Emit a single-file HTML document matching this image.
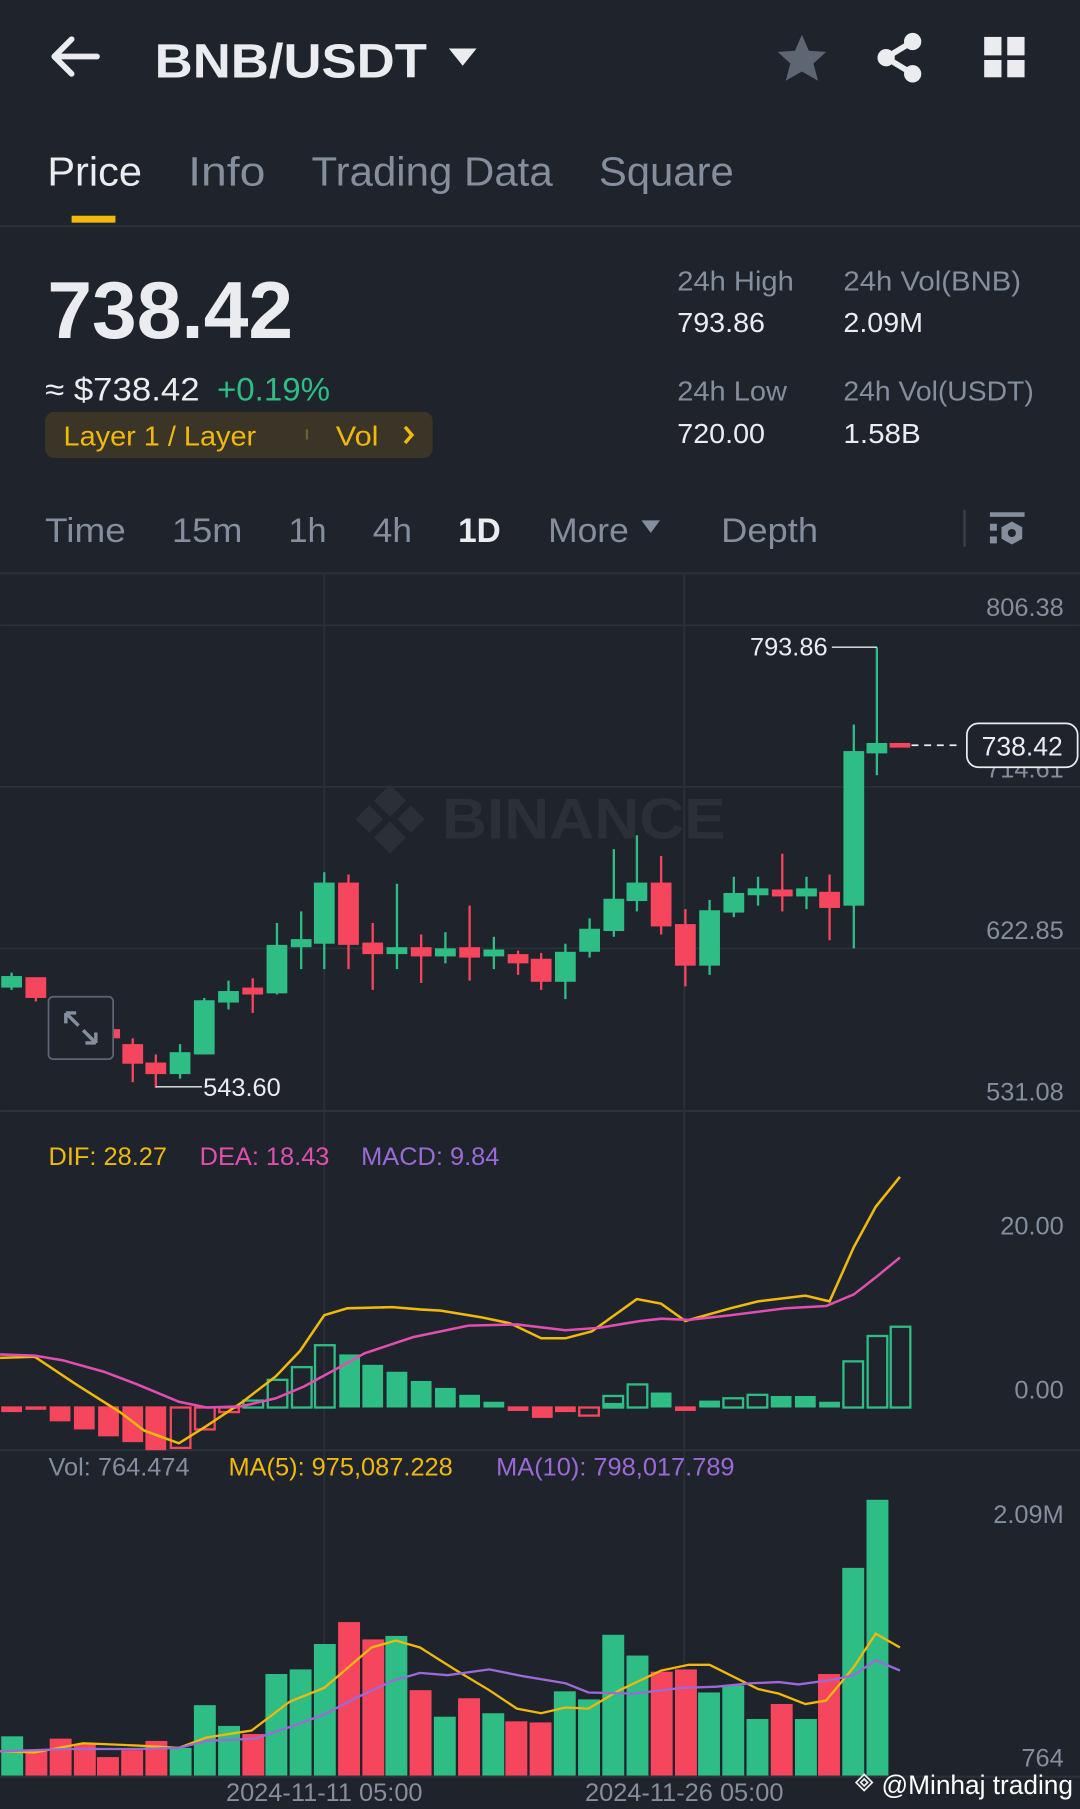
<!DOCTYPE html>
<html><head><meta charset="utf-8"><style>
html,body{margin:0;padding:0;background:#1f232b;width:1080px;height:1809px;overflow:hidden}
svg{display:block}
text{font-family:"Liberation Sans",sans-serif}
</style></head><body>
<svg width="1080" height="1809" viewBox="0 0 936 1568" xmlns="http://www.w3.org/2000/svg">
<rect width="936" height="1568" fill="#1f232b"/>
<!-- header -->
<path d="M47 49 H84 M47 49 L62 34 M47 49 L62 64" stroke="#eaecef" stroke-width="5" fill="none" stroke-linecap="round" stroke-linejoin="round"/>
<text x="134" y="67" font-size="42" font-weight="bold" fill="#eaecef" textLength="236" lengthAdjust="spacingAndGlyphs">BNB/USDT</text>
<path d="M389 42 H413 L401 57 Z" fill="#eaecef"/>
<path d="M695 30 L701 44 L716 45 L705 55 L709 70 L695 62 L681 70 L685 55 L674 45 L689 44 Z" fill="#5e6673"/>
<g fill="#eaecef" stroke="#eaecef"><circle cx="791" cy="36" r="7"/><circle cx="791" cy="64" r="7"/><circle cx="768" cy="50" r="7"/><path d="M791 36 L768 50 L791 64" stroke-width="5" fill="none"/></g>
<g fill="#eaecef"><rect x="853" y="32" width="15" height="16"/><rect x="873" y="32" width="15" height="16"/><rect x="853" y="52" width="15" height="15"/><rect x="873" y="52" width="15" height="15"/></g>
<!-- tabs -->
<g font-size="35">
<text x="41" y="161" fill="#eaecef" textLength="82" lengthAdjust="spacingAndGlyphs">Price</text>
<text x="163" y="161" fill="#848e9c" textLength="67" lengthAdjust="spacingAndGlyphs">Info</text>
<text x="270" y="161" fill="#848e9c" textLength="209" lengthAdjust="spacingAndGlyphs">Trading Data</text>
<text x="519" y="161" fill="#848e9c" textLength="117" lengthAdjust="spacingAndGlyphs">Square</text>
</g>
<rect x="62" y="187" width="38" height="6" fill="#f0b90b"/>
<rect x="0" y="195" width="936" height="2" fill="#2b3139"/>
<!-- price -->
<text x="41" y="293" font-size="70" font-weight="bold" fill="#eaecef" textLength="213" lengthAdjust="spacingAndGlyphs">738.42</text>
<text x="39" y="347" font-size="28" fill="#eaecef" textLength="134" lengthAdjust="spacingAndGlyphs">≈ $738.42</text>
<text x="188" y="347" font-size="28" fill="#2ebd85" textLength="98" lengthAdjust="spacingAndGlyphs">+0.19%</text>
<rect x="39" y="357" width="336" height="40" rx="8" fill="#3a3526"/>
<text x="55" y="386" font-size="24" fill="#f0b90b" textLength="167" lengthAdjust="spacingAndGlyphs">Layer 1 / Layer</text>
<rect x="265" y="372" width="2" height="9" fill="#6b6030"/>
<text x="291" y="386" font-size="24" fill="#f0b90b" textLength="37" lengthAdjust="spacingAndGlyphs">Vol</text>
<path d="M351 370 L357 377 L351 384" stroke="#f0b90b" stroke-width="3" fill="none"/>
<g font-size="24">
<text x="587" y="252" fill="#848e9c" textLength="101" lengthAdjust="spacingAndGlyphs">24h High</text>
<text x="587" y="288" fill="#eaecef" textLength="76" lengthAdjust="spacingAndGlyphs">793.86</text>
<text x="587" y="347" fill="#848e9c" textLength="95" lengthAdjust="spacingAndGlyphs">24h Low</text>
<text x="587" y="384" fill="#eaecef" textLength="76" lengthAdjust="spacingAndGlyphs">720.00</text>
<text x="731" y="252" fill="#848e9c" textLength="154" lengthAdjust="spacingAndGlyphs">24h Vol(BNB)</text>
<text x="731" y="288" fill="#eaecef" textLength="69" lengthAdjust="spacingAndGlyphs">2.09M</text>
<text x="731" y="347" fill="#848e9c" textLength="165" lengthAdjust="spacingAndGlyphs">24h Vol(USDT)</text>
<text x="731" y="384" fill="#eaecef" textLength="67" lengthAdjust="spacingAndGlyphs">1.58B</text>
</g>
<!-- time row -->
<g font-size="30" fill="#848e9c">
<text x="39" y="470" textLength="70" lengthAdjust="spacingAndGlyphs">Time</text>
<text x="149" y="470" textLength="61" lengthAdjust="spacingAndGlyphs">15m</text>
<text x="250" y="470" textLength="33" lengthAdjust="spacingAndGlyphs">1h</text>
<text x="323" y="470" textLength="34" lengthAdjust="spacingAndGlyphs">4h</text>
<text x="397" y="470" fill="#eaecef" font-weight="bold" textLength="37" lengthAdjust="spacingAndGlyphs">1D</text>
<text x="475" y="470" textLength="70" lengthAdjust="spacingAndGlyphs">More</text>
<text x="625" y="470" textLength="84" lengthAdjust="spacingAndGlyphs">Depth</text>
</g>
<path d="M556 451 H572 L564 462 Z" fill="#848e9c"/>
<rect x="835" y="442" width="2" height="32" fill="#3a414b"/>
<g fill="#848e9c"><rect x="858" y="444" width="30" height="4"/><rect x="858" y="454" width="6" height="6"/><rect x="858" y="465" width="6" height="6"/><path d="M877 452 L886 457 V467 L877 472 L868 467 V457 Z"/></g>
<circle cx="877" cy="462" r="3.5" fill="#1f232b"/>
<!-- chart grid -->
<rect x="0" y="496" width="936" height="2" fill="#2b3139"/>
<g stroke="#2b3139" stroke-width="1.5">
<line x1="0" y1="542" x2="936" y2="542"/><line x1="0" y1="682" x2="936" y2="682"/><line x1="0" y1="822" x2="936" y2="822"/>
<line x1="281" y1="498" x2="281" y2="1540"/><line x1="593" y1="498" x2="593" y2="1540"/>
</g>
<rect x="0" y="962" width="936" height="2" fill="#2b3139"/>
<rect x="0" y="1256" width="936" height="2" fill="#2b3139"/>
<rect x="0" y="1539" width="936" height="2" fill="#2b3139"/>
<!-- watermark -->
<g fill="#2a2f38">
<path d="M338 680 L352 694 L338 708 L324 694 Z M338 712 L352 726 L338 740 L324 726 Z M320 698 L332 710 L320 722 L308 710 Z M356 698 L368 710 L356 722 L344 710 Z"/>
<text x="383" y="727" font-size="50" font-weight="bold" textLength="246" lengthAdjust="spacingAndGlyphs">BINANCE</text>
</g>
<!-- axis labels -->
<g font-size="22" fill="#848e9c" text-anchor="end">
<text x="922" y="534">806.38</text><text x="922" y="674">714.61</text><text x="922" y="814">622.85</text><text x="922" y="954">531.08</text>
<text x="922" y="1070">20.00</text><text x="922" y="1212">0.00</text><text x="922" y="1320">2.09M</text><text x="922" y="1531">764</text>
</g>
<g font-size="22" fill="#848e9c" text-anchor="middle">
<text x="281" y="1561">2024-11-11 05:00</text><text x="593" y="1561">2024-11-26 05:00</text>
</g>
<!-- candles -->
<g stroke-width="2">
<g stroke="#2ebd85" fill="#2ebd85">
<line x1="10" y1="843" x2="10" y2="858"/><rect x="2" y="847" width="16" height="8"/>
<line x1="156" y1="905" x2="156" y2="935"/><rect x="148" y="913" width="16" height="17"/>
<line x1="177" y1="865" x2="177" y2="913"/><rect x="169" y="868" width="16" height="45"/>
<line x1="198" y1="850" x2="198" y2="875"/><rect x="190" y="860" width="16" height="8"/>
<line x1="240" y1="800" x2="240" y2="862"/><rect x="232" y="820" width="16" height="40"/>
<line x1="261" y1="790" x2="261" y2="840"/><rect x="253" y="815" width="16" height="5"/>
<line x1="281" y1="756" x2="281" y2="840"/><rect x="273" y="766" width="16" height="51"/>
<line x1="344" y1="766" x2="344" y2="840"/><rect x="336" y="822" width="16" height="4"/>
<line x1="386" y1="808" x2="386" y2="835"/><rect x="378" y="823" width="16" height="5"/>
<line x1="428" y1="812" x2="428" y2="840"/><rect x="420" y="824" width="16" height="4"/>
<line x1="490" y1="818" x2="490" y2="866"/><rect x="482" y="826" width="16" height="24"/>
<line x1="511" y1="796" x2="511" y2="830"/><rect x="503" y="806" width="16" height="18"/>
<line x1="532" y1="736" x2="532" y2="812"/><rect x="524" y="780" width="16" height="26"/>
<line x1="552" y1="724" x2="552" y2="790"/><rect x="544" y="766" width="16" height="14"/>
<line x1="615" y1="780" x2="615" y2="845"/><rect x="607" y="790" width="16" height="46"/>
<line x1="636" y1="760" x2="636" y2="795"/><rect x="628" y="775" width="16" height="15"/>
<line x1="657" y1="760" x2="657" y2="785"/><rect x="649" y="771" width="16" height="4"/>
<line x1="699" y1="760" x2="699" y2="788"/><rect x="691" y="771" width="16" height="5"/>
<line x1="740" y1="628" x2="740" y2="822"/><rect x="732" y="652" width="16" height="132"/>
<line x1="760" y1="561" x2="760" y2="672"/><rect x="752" y="645" width="16" height="7"/>
</g>
<g stroke="#f6465d" fill="#f6465d">
<rect x="23" y="848" width="16" height="16"/><line x1="31" y1="848" x2="31" y2="868"/>
<rect x="87" y="893" width="16" height="6"/>
<line x1="115" y1="900" x2="115" y2="938"/><rect x="107" y="906" width="16" height="15"/>
<line x1="135" y1="914" x2="135" y2="943"/><rect x="127" y="922" width="16" height="8"/>
<line x1="219" y1="848" x2="219" y2="878"/><rect x="211" y="857" width="16" height="4"/>
<line x1="302" y1="758" x2="302" y2="840"/><rect x="294" y="766" width="16" height="52"/>
<line x1="323" y1="800" x2="323" y2="858"/><rect x="315" y="818" width="16" height="8"/>
<line x1="365" y1="810" x2="365" y2="852"/><rect x="357" y="822" width="16" height="6"/>
<line x1="407" y1="785" x2="407" y2="850"/><rect x="399" y="822" width="16" height="7"/>
<line x1="449" y1="824" x2="449" y2="845"/><rect x="441" y="828" width="16" height="6"/>
<line x1="469" y1="826" x2="469" y2="858"/><rect x="461" y="832" width="16" height="18"/>
<line x1="573" y1="742" x2="573" y2="810"/><rect x="565" y="766" width="16" height="36"/>
<line x1="594" y1="788" x2="594" y2="855"/><rect x="586" y="802" width="16" height="34"/>
<line x1="678" y1="740" x2="678" y2="790"/><rect x="670" y="772" width="16" height="4"/>
<line x1="719" y1="758" x2="719" y2="815"/><rect x="711" y="774" width="16" height="12"/>
<rect x="772" y="645" width="16" height="2"/>
</g>
</g>
<path d="M790 646 H830" stroke="#eaecef" stroke-width="1.5" stroke-dasharray="6 5"/>
<rect x="838" y="627" width="96" height="38" rx="10" fill="#1f232b" stroke="#eaecef" stroke-width="1.5"/>
<text x="886" y="655" font-size="23" fill="#eaecef" text-anchor="middle">738.42</text>
<path d="M721 561 H760" stroke="#eaecef" stroke-width="1.2"/>
<text x="650" y="568" font-size="22" fill="#eaecef">793.86</text>
<path d="M135 942 H175" stroke="#eaecef" stroke-width="1.2"/>
<text x="176" y="950" font-size="22" fill="#eaecef">543.60</text>
<!-- expand icon -->
<rect x="42" y="864" width="56" height="54" rx="4" fill="#1f232b" stroke="#5e6673" stroke-width="1.5"/>
<g stroke="#848e9c" stroke-width="3" fill="none"><path d="M57 878 L68 889 M57 878 V887 M57 878 H66"/><path d="M83 904 L72 893 M83 904 V895 M83 904 H74"/></g>
<!-- MACD -->
<g font-size="22">
<text x="42" y="1010" fill="#f0b90b">DIF: 28.27</text>
<text x="173" y="1010" fill="#e04fb0">DEA: 18.43</text>
<text x="313" y="1010" fill="#9c6ad8">MACD: 9.84</text>
</g>
<g fill="#f6465d">
<rect x="1" y="1219" width="18" height="5"/><rect x="22" y="1219" width="18" height="3"/><rect x="43" y="1219" width="18" height="13"/><rect x="64" y="1219" width="18" height="20"/><rect x="85" y="1219" width="18" height="26"/><rect x="106" y="1219" width="18" height="31"/><rect x="126" y="1219" width="18" height="38"/>
<rect x="440" y="1219" width="18" height="4"/><rect x="461" y="1219" width="18" height="10"/><rect x="481" y="1219" width="18" height="5"/><rect x="585" y="1219" width="18" height="4"/>
</g>
<g fill="none" stroke="#f6465d" stroke-width="2"><rect x="148" y="1220" width="17" height="35"/><rect x="169" y="1220" width="17" height="19"/><rect x="190" y="1220" width="17" height="4"/><rect x="502" y="1220" width="17" height="7"/></g>
<g fill="#2ebd85">
<rect x="294" y="1174" width="18" height="46"/><rect x="314" y="1183" width="18" height="37"/><rect x="335" y="1189" width="18" height="31"/><rect x="356" y="1197" width="18" height="23"/><rect x="377" y="1203" width="18" height="17"/><rect x="398" y="1209" width="18" height="11"/><rect x="419" y="1215" width="18" height="5"/>
<rect x="523" y="1216" width="18" height="4"/><rect x="564" y="1207" width="18" height="13"/><rect x="606" y="1214" width="18" height="6"/><rect x="668" y="1210" width="18" height="10"/><rect x="689" y="1210" width="18" height="10"/><rect x="710" y="1215" width="18" height="5"/>
</g>
<g fill="none" stroke="#2ebd85" stroke-width="2"><rect x="211" y="1214" width="17" height="6"/><rect x="232" y="1196" width="17" height="24"/><rect x="253" y="1185" width="17" height="35"/><rect x="273" y="1166" width="17" height="54"/><rect x="523" y="1210" width="17" height="10"/><rect x="544" y="1200" width="17" height="20"/><rect x="627" y="1212" width="17" height="8"/><rect x="648" y="1209" width="17" height="11"/><rect x="731" y="1180" width="17" height="40"/><rect x="752" y="1158" width="17" height="62"/><rect x="772" y="1150" width="17" height="70"/></g>
<polyline fill="none" stroke="#f0b90b" stroke-width="2.2" points="0,1177 30,1176 66,1200 104,1224 125,1240 155,1251 179,1236 209,1216 239,1193 260,1171 281,1140 301,1134 340,1133 364,1135 382,1136 418,1142 442,1147 469,1160 490,1160 513,1154 552,1126 573,1130 594,1145 633,1134 657,1128 698,1123 719,1128 740,1081 759,1046 780,1020"/>
<polyline fill="none" stroke="#e04fb0" stroke-width="2.2" points="0,1174 30,1175 54,1179 90,1189 119,1200 155,1215 179,1220 209,1219 239,1212 263,1202 287,1189 316,1173 358,1159 406,1149 448,1148 490,1153 519,1151 555,1145 573,1143 597,1144 633,1140 681,1134 716,1132 740,1122 758,1108 780,1090"/>
<!-- volume -->
<g font-size="22">
<text x="42" y="1279" fill="#848e9c">Vol: 764.474</text>
<text x="198" y="1279" fill="#f0b90b">MA(5): 975,087.228</text>
<text x="430" y="1279" fill="#9c6ad8">MA(10): 798,017.789</text>
</g>
<g fill="#2ebd85">
<rect x="1" y="1505" width="19" height="34"/><rect x="147" y="1515" width="19" height="24"/><rect x="168" y="1478" width="19" height="61"/><rect x="189" y="1496" width="19" height="43"/>
<rect x="230" y="1451" width="19" height="88"/><rect x="251" y="1447" width="19" height="92"/><rect x="272" y="1425" width="19" height="114"/><rect x="334" y="1418" width="19" height="121"/>
<rect x="376" y="1488" width="19" height="51"/><rect x="418" y="1485" width="19" height="54"/><rect x="480" y="1466" width="19" height="73"/><rect x="501" y="1473" width="19" height="66"/>
<rect x="522" y="1417" width="19" height="122"/><rect x="543" y="1435" width="19" height="104"/><rect x="605" y="1467" width="19" height="72"/><rect x="626" y="1461" width="19" height="78"/>
<rect x="647" y="1490" width="19" height="49"/><rect x="689" y="1490" width="19" height="49"/><rect x="730" y="1359" width="19" height="180"/><rect x="751" y="1300" width="19" height="239"/>
</g>
<g fill="#f6465d">
<rect x="22" y="1518" width="19" height="21"/><rect x="43" y="1507" width="19" height="32"/><rect x="64" y="1512" width="19" height="27"/><rect x="84" y="1523" width="19" height="16"/>
<rect x="105" y="1517" width="19" height="22"/><rect x="126" y="1509" width="19" height="30"/><rect x="210" y="1503" width="19" height="36"/><rect x="293" y="1406" width="19" height="133"/>
<rect x="314" y="1421" width="19" height="118"/><rect x="355" y="1465" width="19" height="74"/><rect x="397" y="1472" width="19" height="67"/><rect x="438" y="1492" width="19" height="47"/>
<rect x="459" y="1493" width="19" height="46"/><rect x="564" y="1449" width="19" height="90"/><rect x="585" y="1447" width="19" height="92"/><rect x="668" y="1477" width="19" height="62"/>
<rect x="709" y="1451" width="19" height="88"/>
</g>
<polyline fill="none" stroke="#f0b90b" stroke-width="2" points="0,1518 30,1519 72,1511 119,1513 155,1515 179,1506 218,1500 251,1475 281,1463 322,1428 343,1422 364,1428 394,1447 424,1465 448,1481 469,1485 490,1480 510,1481 537,1465 573,1448 597,1443 615,1443 657,1464 675,1468 698,1477 716,1474 740,1445 759,1416 780,1428"/>
<polyline fill="none" stroke="#9c6ad8" stroke-width="2" points="0,1518 60,1516 119,1516 155,1515 179,1509 221,1507 251,1497 281,1486 310,1471 340,1457 364,1450 388,1452 424,1447 454,1453 490,1459 510,1467 549,1468 591,1463 621,1462 651,1459 675,1458 692,1460 722,1456 740,1452 759,1439 780,1448"/>
<!-- footer watermark -->
<g fill="none" stroke="#eaecef" stroke-width="1.5"><path d="M749 1538 L756 1545 L749 1552 L742 1545 Z"/><path d="M749 1542 L752 1545 L749 1548 L746 1545 Z"/></g>
<text x="764" y="1555" font-size="23" fill="#ffffff" textLength="166" lengthAdjust="spacingAndGlyphs">@Minhaj trading</text>
</svg>
</body></html>
